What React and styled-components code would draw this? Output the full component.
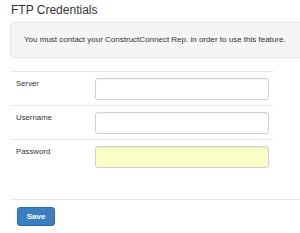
import React from "react";
import styled, { createGlobalStyle } from "styled-components";

const Global = createGlobalStyle`
  html, body { margin: 0; padding: 0; background: #fff; overflow: hidden; }
  body { font-family: "Liberation Sans", Arial, sans-serif; color: #333; }
  * { box-sizing: border-box; }
`;

const Page = styled.div`
  width: 310px;
  padding: 2px 0 0 10px;
`;

const Title = styled.h3`
  margin: 0 0 4px 1px;
  font-size: 12px;
  line-height: 16px;
  font-weight: normal;
  color: #333;
`;

const Alert = styled.div`
  height: 36px;
  display: flex;
  align-items: center;
  padding: 0 0 1px 13px;
  background: #f5f5f5;
  border: 1px solid #e6e6e6;
  border-radius: 3px;
  font-size: 8px;
  color: #333;
  margin-bottom: 13px;
`;

const Form = styled.div`
  width: 263px;
`;

const Row = styled.div`
  display: flex;
  align-items: flex-start;
  border-top: 1px solid #e8e8e8;
  padding: 6px 4px 5px 6px;
`;

const Label = styled.label`
  width: 79px;
  font-size: 7.8px;
  line-height: 12px;
  color: #333;
`;

const Input = styled.div`
  width: 174px;
  height: 22px;
  border: 1px solid #d0d0d0;
  border-radius: 3px;
  background: ${(p) => (p.$filled ? "#fbffc6" : "#fff")};
  box-shadow: inset 0 1px 1px rgba(0, 0, 0, 0.05);
`;

const Footer = styled.div`
  margin-top: 26px;
  border-top: 1px solid #e8e8e8;
  padding: 5px 0 0 7px;
`;

const Button = styled.button`
  width: 38px;
  height: 19px;
  border: 1px solid #2e6da4;
  border-radius: 3px;
  background: #3a7fc0;
  color: #fff;
  font-family: "Liberation Sans", Arial, sans-serif;
  font-weight: bold;
  font-size: 8px;
  padding: 0;
`;

const fields = [
  { label: "Server" },
  { label: "Username" },
  { label: "Password", filled: true },
];

export default function App() {
  return (
    <>
      <Global />
      <Page>
        <Title>FTP Credentials</Title>
        <Alert>You must contact your ConstructConnect Rep. in order to use this feature.</Alert>
        <Form>
          {fields.map((f) => (
            <Row key={f.label}>
              <Label>{f.label}</Label>
              <Input $filled={f.filled} />
            </Row>
          ))}
        </Form>
        <Footer>
          <Button>Save</Button>
        </Footer>
      </Page>
    </>
  );
}
